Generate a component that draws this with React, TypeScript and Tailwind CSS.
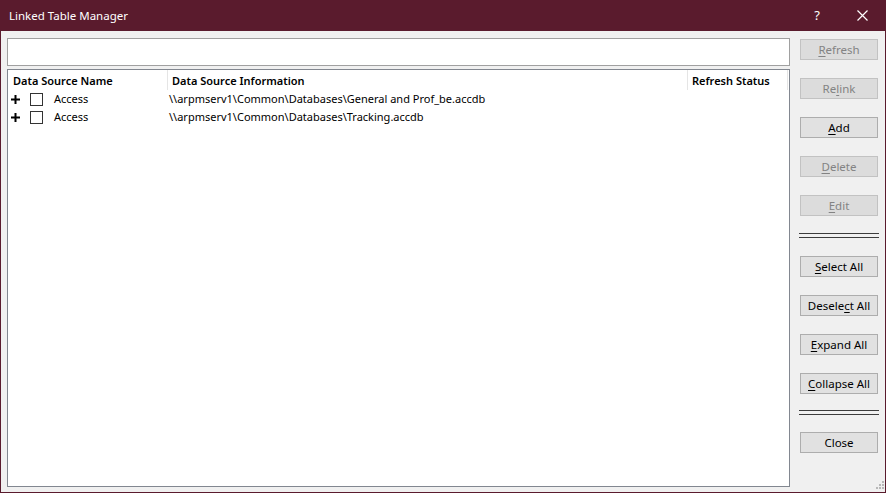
import React from "react";

function Btn({ label, u, disabled }: { label: string; u: number; disabled?: boolean }) {
  const a = u < 0 ? label : label.slice(0, u);
  const b = u < 0 ? "" : label.slice(u, u + 1);
  const c = u < 0 ? "" : label.slice(u + 1);
  return (
    <div
      className={
        "w-[78px] h-[21px] flex items-center justify-center border text-[11.5px] leading-none " +
        (disabled
          ? "bg-[#dcdcdc] border-[#c2c2c2] text-[#838383]"
          : "bg-[#e1e1e1] border-[#adadad] text-black")
      }
    >
      <span>
        {a}
        <span className="underline underline-offset-2">{b}</span>
        {c}
      </span>
    </div>
  );
}

function Sep() {
  return (
    <div className="w-[80px] -ml-[1px] flex flex-col gap-[3px]">
      <div className="h-px bg-[#3c3c3c]" />
      <div className="h-px bg-[#3c3c3c]" />
    </div>
  );
}

function Row({ path }: { path: string }) {
  return (
    <div className="h-[18px] flex items-center text-[11px] text-black">
      <div className="w-[160px] flex items-center shrink-0">
        <svg width="9" height="9" viewBox="0 0 9 9" className="ml-[3px]">
          <rect x="3.5" y="0" width="2" height="9" fill="#000" />
          <rect x="0" y="3.5" width="9" height="2" fill="#000" />
        </svg>
        <div className="ml-[10px] w-[13px] h-[13px] border border-[#333] bg-white" />
        <span className="ml-[11px]">Access</span>
      </div>
      <span className="ml-[1px]">{path}</span>
    </div>
  );
}

export default function App() {
  return (
    <div
      className="w-[886px] h-[493px] bg-[#5a1b2d] flex flex-col"
      style={{ fontFamily: '"Noto Sans", "Open Sans", sans-serif' }}
    >
      <div className="h-[31px] flex items-center text-white text-[11.5px] shrink-0">
        <span className="ml-[9px]">Linked Table Manager</span>
        <span className="ml-auto mr-[37px] text-[13px]">?</span>
        <svg width="11" height="11" viewBox="0 0 11 11" className="mr-[18px]">
          <path d="M0.5 0.5 L10.5 10.5 M10.5 0.5 L0.5 10.5" stroke="#fff" strokeWidth="1.2" />
        </svg>
      </div>
      <div className="flex-1 mx-px mb-px bg-[#f0f0f0] flex relative">
        <div className="ml-[6px] mt-[7px] w-[783px] flex flex-col">
          <div className="h-[28px] bg-white border border-[#a0a0a0]" />
          <div className="mt-[3px] h-[418px] bg-white border border-[#828790] flex flex-col">
            <div className="h-[20px] flex text-[11px] font-semibold text-black">
              <div className="w-[160px] border-r border-[#e5e5e5] pl-[5px] pt-[2px] flex items-center">
                Data Source Name
              </div>
              <div className="w-[520px] border-r border-[#e5e5e5] pl-[4px] pt-[2px] flex items-center">
                Data Source Information
              </div>
              <div className="w-[100px] border-r border-[#e5e5e5] pl-[4px] pt-[2px] flex items-center">
                Refresh Status
              </div>
            </div>
            <Row path="\\arpmserv1\Common\Databases\General and Prof_be.accdb" />
            <Row path="\\arpmserv1\Common\Databases\Tracking.accdb" />
          </div>
        </div>
        <div className="ml-[10px] mt-[8px] flex flex-col">
          <Btn label="Refresh" u={0} disabled />
          <div className="h-[18px]" />
          <Btn label="Relink" u={2} disabled />
          <div className="h-[18px]" />
          <Btn label="Add" u={0} />
          <div className="h-[18px]" />
          <Btn label="Delete" u={0} disabled />
          <div className="h-[18px]" />
          <Btn label="Edit" u={0} disabled />
          <div className="h-[17px]" />
          <Sep />
          <div className="h-[18px]" />
          <Btn label="Select All" u={0} />
          <div className="h-[18px]" />
          <Btn label="Deselect All" u={6} />
          <div className="h-[18px]" />
          <Btn label="Expand All" u={0} />
          <div className="h-[18px]" />
          <Btn label="Collapse All" u={0} />
          <div className="h-[16px]" />
          <Sep />
          <div className="h-[17px]" />
          <Btn label="Close" u={-1} />
        </div>
        <svg width="10" height="10" viewBox="0 0 10 10" className="absolute right-[1px] bottom-[1px]">
          {[
            [8, 0],
            [8, 3],
            [5, 3],
            [8, 6],
            [5, 6],
            [2, 6],
          ].map(([x, y], i) => (
            <rect key={i} x={x} y={y} width="2" height="2" fill="#b8b8b8" />
          ))}
        </svg>
      </div>
    </div>
  );
}
